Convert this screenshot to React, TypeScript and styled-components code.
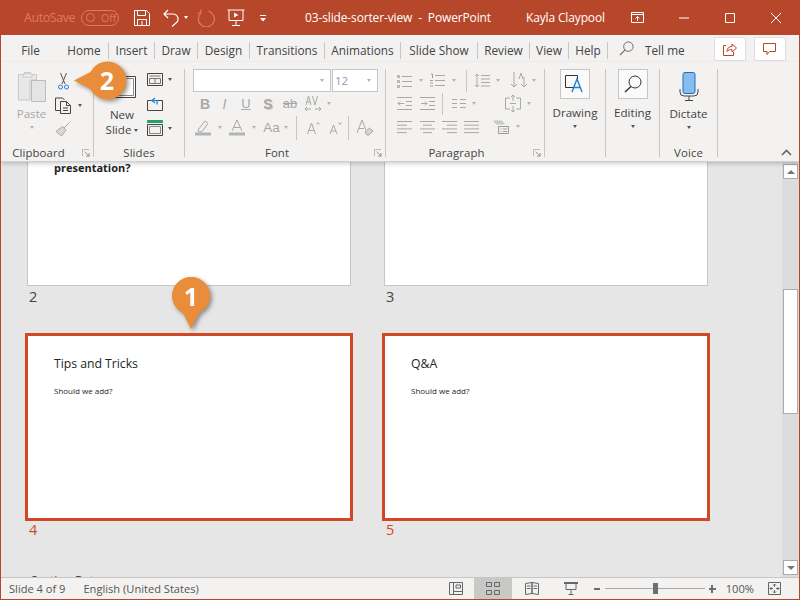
import React from "react";
import styled, { createGlobalStyle } from "styled-components";

const RUST = "#b7472a";
const DIM = "#a8a8a8";
const DARK = "#444444";
const UI_FONT = `"Open Sans", "Noto Sans", "Liberation Sans", sans-serif`;

const GlobalStyle = createGlobalStyle`
  html, body { margin: 0; padding: 0; background: #e6e6e6; }
  * { box-sizing: border-box; }
`;

const Shell = styled.div`
  position: relative;
  width: 800px;
  height: 600px;
  display: flex;
  flex-direction: column;
  overflow: hidden;
  border: 1px solid ${RUST};
  border-top: none;
  font-family: ${UI_FONT};
  background: #f3f2f1;
`;

/* title bar */
const TitleBar = styled.div`
  flex: 0 0 35px;
  margin: 0 -1px;
  display: flex;
  align-items: center;
  background: ${RUST};
  color: #fff;
  font-size: 12px;
`;

const Slot = styled.div<{ $x: number }>`
  margin-left: ${(p) => p.$x}px;
  display: flex;
  align-items: center;
  white-space: nowrap;
`;

const TitleText = styled(Slot)`
  letter-spacing: -0.14px;
`;

const AutoSave = styled.span`
  color: #de7a62;
  font-size: 12.5px;
  letter-spacing: -0.45px;
`;

const Toggle = styled.span`
  width: 38px;
  height: 16px;
  border: 1px solid #de7a62;
  border-radius: 8px;
  display: flex;
  align-items: center;
  gap: 6px;
  padding-left: 4px;
  color: #de7a62;
  font-size: 10.5px;
  &::before {
    content: "";
    width: 7px;
    height: 7px;
    border-radius: 50%;
    border: 1px solid #de7a62;
  }
`;

/* tabs */
const TabRow = styled.div`
  flex: 0 0 27px;
  display: flex;
  align-items: center;
  font-size: 11.8px;
  color: #444;
  position: relative;
`;

const Tab = styled.div<{ $w: number; $active?: boolean; $plain?: boolean }>`
  position: relative;
  width: ${(p) => p.$w}px;
  height: 17px;
  line-height: 17px;
  margin-top: 3px;
  text-align: center;
  white-space: nowrap;
  border-right: ${(p) => (p.$plain ? "none" : "1px solid #c8c6c4")};
  ${(p) =>
    p.$active &&
    `&::after {
      content: "";
      position: absolute;
      left: 6px;
      right: 4px;
      bottom: -6px;
      height: 2px;
      background: ${RUST};
    }`}
`;

const TellMe = styled(Slot)`
  margin-top: 3px;
`;

const TopButton = styled.div<{ $x: number }>`
  margin-left: ${(p) => p.$x}px;
  width: 32px;
  height: 24px;
  margin-top: 1px;
  background: #fff;
  border: 1px solid #e1dfdd;
  border-radius: 2px;
  display: flex;
  align-items: center;
  justify-content: center;
`;

/* ribbon */
const Ribbon = styled.div`
  flex: 0 0 100px;
  min-height: 0;
  position: relative;
  z-index: 2;
  display: flex;
  padding: 7px 0 4px;
  background: #f3f2f1;
  border-bottom: 1px solid #d0d0d0;
  box-shadow: 0 2px 4px rgba(0, 0, 0, 0.18);
`;

const Group = styled.div<{ $w: number }>`
  position: relative;
  width: ${(p) => p.$w}px;
  display: flex;
  flex-direction: column;
  border-right: 1px solid #c6c6c6;
`;

const GroupBody = styled.div`
  flex: 1;
  display: flex;
  min-height: 0;
`;

const GroupLabel = styled.div<{ $shift?: number }>`
  flex: none;
  height: 15px;
  line-height: 15px;
  margin-top: auto;
  margin-bottom: -3px;
  padding-right: ${(p) => p.$shift ?? 0}px;
  text-align: center;
  font-size: 11.4px;
  letter-spacing: 0.1px;
  color: #444;
`;

const Launcher = styled.svg`
  position: absolute;
  right: 3px;
  bottom: 0;
  width: 8px;
  height: 8px;
`;

const Column = styled.div<{ $w?: number; $ml?: number; $pt?: number; $start?: boolean }>`
  ${(p) => (p.$w ? `width: ${p.$w}px;` : "")}
  margin-left: ${(p) => p.$ml ?? 0}px;
  padding-top: ${(p) => p.$pt ?? 0}px;
  display: flex;
  flex-direction: column;
  align-items: ${(p) => (p.$start ? "flex-start" : "center")};
`;

const Row = styled.div<{ $h?: number; $ml?: number }>`
  display: flex;
  flex: none;
  align-items: center;
  height: ${(p) => p.$h ?? 24}px;
  margin-left: ${(p) => p.$ml ?? 0}px;
`;

const Big = styled.div<{ $dim?: boolean; $mt?: number }>`
  font-size: 11.6px;
  line-height: 15px;
  margin-top: ${(p) => p.$mt ?? 0}px;
  color: ${(p) => (p.$dim ? DIM : DARK)};
  white-space: nowrap;
`;

const Caret = styled.span<{ $ml?: number; $mt?: number; $dim?: boolean; $light?: boolean }>`
  flex: none;
  display: inline-block;
  margin-left: ${(p) => p.$ml ?? 0}px;
  margin-top: ${(p) => p.$mt ?? 0}px;
  border-left: 2.5px solid transparent;
  border-right: 2.5px solid transparent;
  border-top: 3px solid ${(p) => (p.$light ? "#fff" : p.$dim ? "#b4b4b4" : "#555")};
`;

const InlineCaret = styled(Caret)`
  vertical-align: 2px;
`;

const Combos = styled.div`
  display: flex;
  flex: none;
  height: 23px;
  margin-left: 8px;
  gap: 1px;
`;

const Combo = styled.div<{ $w: number }>`
  width: ${(p) => p.$w}px;
  background: #fff;
  border: 1px solid #c6c6c6;
  display: flex;
  align-items: center;
  justify-content: space-between;
  padding: 0 6px 0 2px;
  font-size: 11.5px;
  color: #a890b0;
`;

const Glyph = styled.span<{ $ml?: number; $w?: number; $b?: boolean; $i?: boolean; $u?: boolean; $s?: number; $strike?: boolean; $soft?: boolean }>`
  flex: none;
  width: ${(p) => p.$w ?? 10}px;
  margin-left: ${(p) => p.$ml ?? 0}px;
  text-align: center;
  font-family: "Liberation Sans", sans-serif;
  font-size: ${(p) => p.$s ?? 14}px;
  line-height: 16px;
  color: ${DIM};
  font-weight: ${(p) => (p.$b ? 700 : 400)};
  font-style: ${(p) => (p.$i ? "italic" : "normal")};
  text-decoration: ${(p) => (p.$u ? "underline" : p.$strike ? "line-through" : "none")};
  ${(p) => (p.$soft ? "text-shadow: 1px 1px 1px #ccc;" : "")}
`;

const RowRule = styled.span<{ $ml: number; $h?: number }>`
  flex: none;
  width: 1px;
  height: ${(p) => p.$h ?? 24}px;
  margin-left: ${(p) => p.$ml}px;
  background: #c6c6c6;
`;

const Tool = styled.svg<{ $ml?: number }>`
  flex: none;
  margin-left: ${(p) => p.$ml ?? 0}px;
  fill: none;
  display: block;
`;

const Spacer = styled.span<{ $w: number }>`
  width: ${(p) => p.$w}px;
`;

const IconBox = styled.div`
  width: 30px;
  height: 30px;
  background: #fafafa;
  border: 1px solid #c6c6c6;
  display: flex;
  align-items: center;
  justify-content: center;
`;

const Collapse = styled.svg`
  position: absolute;
  right: 7px;
  bottom: 5px;
  width: 11px;
  height: 7px;
`;

/* slide sorter */
const Workspace = styled.div`
  flex: 1;
  min-height: 0;
  display: flex;
  background: #e6e6e6;
`;

const Sorter = styled.div`
  flex: 1;
  min-width: 0;
  overflow: hidden;
  padding-left: 24px;
`;

const SlideRow = styled.div<{ $h: number }>`
  display: flex;
  gap: 29px;
  height: ${(p) => p.$h}px;
`;

const Cell = styled.div`
  width: 328px;
`;

const Thumb = styled.div<{ $selected?: boolean }>`
  background: #fff;
  color: #262626;
  ${(p) =>
    p.$selected
      ? `height: 188px; border: 3px solid #d24726; padding: 20px 0 0 26px;`
      : `height: 124px; margin: 0 2px; border: 1px solid #c6c6c6; border-top: none; padding: 0 0 0 26px;`}
`;

const SlideText = styled.div`
  font-size: 11px;
  line-height: 12px;
  font-weight: 700;
  color: #222;
`;

const SlideTitle = styled.div`
  font-size: 12.3px;
  line-height: 16px;
  letter-spacing: -0.05px;
`;

const SlideBody = styled.div`
  margin-top: 13px;
  font-size: 8px;
  line-height: 12px;
`;

const SlideNumber = styled.div<{ $selected?: boolean }>`
  padding: ${(p) => (p.$selected ? 0 : 1)}px 0 0 4px;
  margin-top: ${(p) => (p.$selected ? -1 : 0)}px;
  font-size: 14.5px;
  line-height: 20px;
  color: ${(p) => (p.$selected ? "#d24726" : "#444")};
`;

const SectionTitle = styled.div`
  margin: 32px 0 0 6px;
  height: 4px;
  overflow: hidden;
  font-size: 12px;
  line-height: 16px;
  color: #444;
`;

const Scrollbar = styled.div`
  flex: 0 0 17px;
  display: flex;
  flex-direction: column;
  align-items: center;
  background: #dcdcdc;
  padding-top: 2px;
`;

const ScrollButton = styled.div<{ $mt?: number }>`
  width: 15px;
  height: 15px;
  margin-top: ${(p) => p.$mt ?? 0}px;
  background: #fff;
  border: 1px solid #ababab;
  display: flex;
  align-items: center;
  justify-content: center;
`;

const ScrollThumb = styled.div`
  width: 15px;
  height: 125px;
  margin-top: 110px;
  background: #fff;
  border: 1px solid #ababab;
`;

const Arrow = styled.span<{ $up?: boolean }>`
  border-left: 4px solid transparent;
  border-right: 4px solid transparent;
  ${(p) => (p.$up ? "border-bottom" : "border-top")}: 4px solid #777;
`;

/* status bar */
const StatusBar = styled.div`
  flex: 0 0 22px;
  display: flex;
  align-items: center;
  background: #f3f2f1;
  border-top: 1px solid #c6c6c6;
  font-size: 11.1px;
  color: #555;
`;

const StatusView = styled.div<{ $x: number; $active?: boolean; $w?: number }>`
  margin-left: ${(p) => p.$x}px;
  width: ${(p) => p.$w ?? 16}px;
  height: 21px;
  display: flex;
  align-items: center;
  justify-content: center;
  background: ${(p) => (p.$active ? "#c8c8c6" : "transparent")};
`;

const ZoomTrack = styled.div`
  position: relative;
  width: 100px;
  height: 1px;
  margin-left: 5px;
  background: #a8a8a8;
  &::after {
    content: "";
    position: absolute;
    left: 48px;
    top: -5px;
    width: 5px;
    height: 11px;
    background: #6e6e6e;
  }
`;

const ZoomSign = styled.span<{ $plus?: boolean; $ml: number }>`
  position: relative;
  flex: none;
  width: ${(p) => (p.$plus ? 7 : 6)}px;
  height: 2px;
  margin-left: ${(p) => p.$ml}px;
  background: #6e6e6e;
  ${(p) =>
    p.$plus &&
    `&::after { content: ""; position: absolute; left: 2.5px; top: -3px; width: 2px; height: 8px; background: #6e6e6e; }`}
`;

/* callouts */
const Callout = styled.div<{ $x: number; $y: number; $w: number; $h: number }>`
  position: absolute;
  z-index: 5;
  left: ${(p) => p.$x}px;
  top: ${(p) => p.$y}px;
  width: ${(p) => p.$w}px;
  height: ${(p) => p.$h}px;
  filter: drop-shadow(2px 2px 2px rgba(0, 0, 0, 0.4));
`;

const CalloutText = styled.span<{ $x: number; $y: number }>`
  position: absolute;
  left: ${(p) => p.$x}px;
  top: ${(p) => p.$y}px;
  width: 38px;
  text-align: center;
  font-family: "Open Sans", sans-serif;
  font-weight: 700;
  font-size: 25px;
  line-height: 38px;
  color: #fff;
`;

/* drawn icons */
const stroke = (c: string, w = 1) => ({ stroke: c, strokeWidth: w });

const Lines = ({ ml, kind }: { ml?: number; kind: "l" | "c" | "r" | "j" }) => {
  const ends = {
    l: [[0, 15], [0, 10], [0, 15], [0, 10]],
    c: [[0, 15], [3, 12], [0, 15], [3, 12]],
    r: [[0, 15], [5, 15], [0, 15], [5, 15]],
    j: [[0, 15], [0, 15], [0, 15], [0, 15]],
  }[kind];
  return (
    <Tool $ml={ml} width="15" height="14" viewBox="0 0 15 14">
      {ends.map(([a, b], i) => (
        <path key={i} d={`M${a} ${1.5 + i * 3.7}H${b}`} {...stroke(DIM)} />
      ))}
    </Tool>
  );
};

const launcher = (
  <Launcher viewBox="0 0 9 9" fill="none">
    <path d="M.5 8V.5H8" stroke="#b0b0b0" />
    <path d="M3 3l5 5M8 4.5V8H4.5" stroke="#8a8a8a" />
  </Launcher>
);

export default function App() {
  return (
    <Shell>
      <GlobalStyle />
      <TitleBar>
        <Slot $x={24}>
          <AutoSave>AutoSave</AutoSave>
        </Slot>
        <Slot $x={6}>
          <Toggle>Off</Toggle>
        </Slot>
        <Slot $x={15}>
          <Tool width="16" height="16" viewBox="0 0 16 16">
            <path d="M.5.5h12l3 3v12H.5zM3.5.5v5h8v-5M3.5 15.5v-6h9v6M8 11v4" {...stroke("#fff")} />
          </Tool>
        </Slot>
        <Slot $x={13}>
          <Tool width="18" height="18" viewBox="0 0 18 18">
            <path d="M5 1 1 5l4 4M1 5h9a5 5 0 0 1 3 9l-4 3.5" {...stroke("#fff", 1.2)} />
          </Tool>
          <Caret $ml={3} $light />
        </Slot>
        <Slot $x={9}>
          <Tool width="18" height="18" viewBox="0 0 18 18">
            <path d="M11.5 2.2A8 8 0 1 1 4 4M4 4V.5M4 4H.5" {...stroke("#de7a62", 1.2)} />
          </Tool>
        </Slot>
        <Slot $x={12}>
          <Tool width="18" height="18" viewBox="0 0 18 18">
            <path d="M.5 1h17M2 1v10.5h14V1M9 11.5v5M5 16.5h8" {...stroke("#fff")} />
            <path d="M7 3.5v5l4.5-2.5z" fill="#fff" />
          </Tool>
        </Slot>
        <Slot $x={15}>
          <Tool width="6" height="8" viewBox="0 0 6 8">
            <path d="M0 1.5h6" {...stroke("#fff")} />
            <path d="M0 4h6L3 7.5z" fill="#fff" />
          </Tool>
        </Slot>
        <TitleText $x={39}>03-slide-sorter-view&nbsp; -&nbsp; PowerPoint</TitleText>
        <TitleText $x={35}>Kayla Claypool</TitleText>
        <Slot $x={26}>
          <Tool width="13" height="11" viewBox="0 0 13 11">
            <path d="M.5.5h12v10H.5zM.5 2.5h12M6.5 9V4.5M4.5 6.5l2-2 2 2" {...stroke("#fff")} />
          </Tool>
        </Slot>
        <Slot $x={35}>
          <Tool width="10" height="2" viewBox="0 0 10 2">
            <path d="M0 1h10" {...stroke("#fff")} />
          </Tool>
        </Slot>
        <Slot $x={36}>
          <Tool width="10" height="10" viewBox="0 0 10 10">
            <path d="M.5.5h9v9h-9z" {...stroke("#fff")} />
          </Tool>
        </Slot>
        <Slot $x={36}>
          <Tool width="10" height="10" viewBox="0 0 10 10">
            <path d="M0 0l10 10M10 0 0 10" {...stroke("#fff")} />
          </Tool>
        </Slot>
      </TitleBar>

      <TabRow>
        <Tab $w={59} $plain>File</Tab>
        <Tab $w={49} $active>Home</Tab>
        <Tab $w={46}>Insert</Tab>
        <Tab $w={43}>Draw</Tab>
        <Tab $w={52}>Design</Tab>
        <Tab $w={75}>Transitions</Tab>
        <Tab $w={76}>Animations</Tab>
        <Tab $w={77}>Slide Show</Tab>
        <Tab $w={52}>Review</Tab>
        <Tab $w={39}>View</Tab>
        <Tab $w={39}>Help</Tab>
        <Slot $x={11}>
          <Tool width="15" height="15" viewBox="0 0 16 16">
            <circle cx="10" cy="6" r="5" {...stroke("#666")} />
            <path d="M6.5 9.5 1 15" {...stroke("#666", 1.2)} />
          </Tool>
        </Slot>
        <TellMe $x={11}>Tell me</TellMe>
        <TopButton $x={29}>
          <Tool width="14" height="14" viewBox="0 0 14 14">
            <path d="M3 3.5H.5v10h10V10M4 9.5C4 6 6 4.5 9 4.5V2l4.5 4L9 10V7.5C7 7.5 5 8 4 9.5z" {...stroke(RUST)} />
          </Tool>
        </TopButton>
        <TopButton $x={8}>
          <Tool width="14" height="13" viewBox="0 0 14 13">
            <path d="M.5.5h12v8H6.5l-2.5 3v-3H.5z" {...stroke(RUST)} />
          </Tool>
        </TopButton>
      </TabRow>

      <Ribbon>
        <Group $w={93}>
          <GroupBody>
            <Column $w={29} $ml={16} $pt={2}>
              <Tool width="28" height="32" viewBox="0 0 28 32">
                <path d="M.5 3.5h6v-2h6v2h6V9h-6.5v20H.5z" fill="#e8e8e8" stroke="#c8c8c8" />
                <path d="M5 3h9v3H5z" fill="#f3f2f1" stroke="#c8c8c8" />
                <path d="M13.5 9.5h14v21h-14z" fill="#e4e4e4" stroke="#bdbdbd" />
              </Tool>
              <Big $dim $mt={3}>Paste</Big>
              <Caret $dim $mt={5} />
            </Column>
            <Column $ml={8}>
              <Row $h={24} $ml={-1}>
                <Tool $ml={5} width="11" height="17" viewBox="0 0 11 17">
                  <path d="M2.5 0 7 11M8.5 0 4 11" {...stroke("#555")} />
                  <circle cx="2.5" cy="14" r="2" {...stroke("#1f7fd0")} />
                  <circle cx="8.5" cy="14" r="2" {...stroke("#1f7fd0")} />
                </Tool>
                <Spacer $w={14} />
              </Row>
              <Row $h={24}>
                <Tool width="17" height="17" viewBox="0 0 17 17">
                  <path d="M5 13.5H.5V1h7l2 2M5.5 4.5h6l4 4v8h-10z" {...stroke("#444")} />
                  <path d="M11.5 4.5v4h4M8 11h5M8 13.5h5" {...stroke("#444")} />
                </Tool>
                <Caret $ml={6} />
              </Row>
              <Row $h={24} $ml={-11}>
                <Tool width="16" height="16" viewBox="0 0 16 16">
                  <path d="M9 7 14.5 1.5M7.5 5.5 11 9l-4.5 6L1 10.5z" fill="#d8d8d8" stroke="#a8a8a8" />
                </Tool>
              </Row>
            </Column>
          </GroupBody>
          <GroupLabel $shift={17}>Clipboard</GroupLabel>
          {launcher}
        </Group>

        <Group $w={91}>
          <GroupBody>
            <Column $w={52} $pt={7} $ml={2}>
              <Tool width="28" height="22" viewBox="0 0 28 22">
                <path d="M.5.5h27v21H.5z" fill="#fff" stroke="#444" />
                <path d="M2.5 2.5h23v17h-23z" stroke="#888" />
              </Tool>
              <Big $mt={9}>New</Big>
              <Big>
                Slide<InlineCaret $ml={3} />
              </Big>
            </Column>
            <Column $ml={-1} $start>
              <Row $h={20}>
                <Tool width="16" height="13" viewBox="0 0 16 13">
                  <path d="M.5.5h15v12H.5z" {...stroke("#444")} />
                  <path d="M2.5 3h11M2.5 5.5h11v5h-11zM8 5.5v5" {...stroke("#777")} />
                </Tool>
                <Caret $ml={5} />
              </Row>
              <Row $h={29}>
                <Tool width="16" height="14" viewBox="0 0 16 14">
                  <path d="M.5 3.5h15v10H.5z" {...stroke("#444")} />
                  <path d="M8 1 5 3.5 8 6M5 3.5h5v4" {...stroke("#1f7fd0", 1.2)} />
                </Tool>
              </Row>
              <Row $h={20}>
                <Tool width="16" height="16" viewBox="0 0 16 16">
                  <path d="M.5.5h15v2H.5z" stroke="#21a366" fill="#21a366" />
                  <path d="M.5 4.5h15v11H.5z" {...stroke("#444")} />
                  <path d="M2.5 6.5h11v7h-11z" {...stroke("#888")} />
                </Tool>
                <Caret $ml={5} />
              </Row>
            </Column>
          </GroupBody>
          <GroupLabel>Slides</GroupLabel>
        </Group>

        <Group $w={201}>
          <Combos>
            <Combo $w={138}>
              <span />
              <Caret $dim />
            </Combo>
            <Combo $w={46}>
              <span>12</span>
              <Caret $dim />
            </Combo>
          </Combos>
          <Row $h={23} $ml={15}>
            <Glyph $b>B</Glyph>
            <Glyph $i $ml={10} $w={9}>I</Glyph>
            <Glyph $u $ml={12} $w={10} $s={13}>U</Glyph>
            <Glyph $b $soft $ml={12} $w={10}>S</Glyph>
            <Glyph $strike $ml={9} $w={16} $s={13}>ab</Glyph>
            <Tool $ml={7} width="16" height="17" viewBox="0 0 16 17">
              <path d="M1 10 3.5 1 6 10M1.8 7h3.5M7.5 1 10 10l2.5-9" {...stroke(DIM)} />
              <path d="M6 14H0M2 12l-2 2 2 2M10 14h6M14 12l2 2-2 2" {...stroke(DIM)} />
            </Tool>
            <Caret $dim $ml={6} />
          </Row>
          <Row $h={25} $ml={10}>
            <Tool width="17" height="17" viewBox="0 0 17 17">
              <path d="M3 11 10 2l3 2.5-6 8-3.5.5z" {...stroke(DIM)} />
              <path d="M0 13.5h16v3H0z" fill="#b4b4b4" />
            </Tool>
            <Caret $dim $ml={6} />
            <Tool $ml={7} width="17" height="17" viewBox="0 0 17 17">
              <path d="M3 12 8 1l5 11M4.8 8.5h7" {...stroke(DIM)} />
              <path d="M0 13.5h16v3H0z" fill="#b4b4b4" />
            </Tool>
            <Caret $dim $ml={6} />
            <Glyph $ml={6} $w={19} $s={13.5}>Aa</Glyph>
            <Caret $dim $ml={3} />
            <RowRule $ml={8} />
            <Tool $ml={10} width="14" height="14" viewBox="0 0 14 14">
              <path d="M.5 13 4.5 2l4 11M2 9.5h5M9.5 3.5l1.5-2 1.5 2" {...stroke(DIM)} />
            </Tool>
            <Tool $ml={8} width="14" height="14" viewBox="0 0 14 14">
              <path d="M1 13 4.5 4 8 13M2.2 10h4.6M9.5 1.5l1.5 2 1.5-2" {...stroke(DIM)} />
            </Tool>
            <RowRule $ml={5} />
            <Tool $ml={7} width="18" height="17" viewBox="0 0 18 17">
              <path d="M1 14 6 1l4 10M3 9.5h5" {...stroke(DIM)} />
              <path d="M9 13l4.5-4 3.5 3-4 4h-2z" fill="#d4d4d4" stroke={DIM} />
            </Tool>
          </Row>
          <GroupLabel $shift={16}>Font</GroupLabel>
          {launcher}
        </Group>

        <Group $w={159}>
          <Row $h={23} $ml={11}>
            <Tool width="15" height="14" viewBox="0 0 15 14">
              <path d="M0 1h3v3H0zM0 6h3v3H0zM0 11h3v3H0z" fill="#b8b8b8" />
              <path d="M5 2.5h10M5 7.5h10M5 12.5h10" {...stroke(DIM)} />
            </Tool>
            <Caret $dim $ml={7} />
            <Tool $ml={7} width="15" height="15" viewBox="0 0 15 15">
              <path d="M1 1h1.5v4M0 7.5h3M0 10h3M0 13h3" {...stroke("#a0a0a0")} />
              <path d="M5 2.5h10M5 7.5h10M5 12.5h10" {...stroke(DIM)} />
            </Tool>
            <Caret $dim $ml={7} />
            <RowRule $ml={10} $h={22} />
            <Tool $ml={7} width="16" height="15" viewBox="0 0 16 15">
              <path d="M3 1v13M1 3l2-2 2 2M1 12l2 2 2-2M7 2.5h9M7 6h9M7 9.5h9M7 13h9" {...stroke(DIM)} />
            </Tool>
            <Caret $dim $ml={6} />
            <Tool $ml={11} width="16" height="17" viewBox="0 0 16 17">
              <path d="M3 0v15M0 12l3 3 3-3M13 5v10M10 12l3 3 3-3M8 7l2-6 2 6" {...stroke(DIM)} />
            </Tool>
            <Caret $dim $ml={5} />
          </Row>
          <Row $h={23} $ml={11}>
            <Tool width="15" height="13" viewBox="0 0 15 13">
              <path d="M0 .5h15M9 4.5h6M9 8.5h6M0 12.5h15M7 6.5H1M3 4.5l-2 2 2 2" {...stroke(DIM)} />
            </Tool>
            <Tool $ml={8} width="15" height="13" viewBox="0 0 15 13">
              <path d="M0 .5h15M9 4.5h6M9 8.5h6M0 12.5h15M1 6.5h6M5 4.5l2 2-2 2" {...stroke(DIM)} />
            </Tool>
            <RowRule $ml={7} $h={22} />
            <Tool $ml={9} width="14" height="9" viewBox="0 0 14 9">
              <path d="M0 .5h5M0 4.5h5M0 8.5h5M8 .5h6M8 4.5h6M8 8.5h6" {...stroke(DIM)} />
            </Tool>
            <Caret $dim $ml={6} />
            <Tool $ml={29} width="16" height="17" viewBox="0 0 16 17">
              <path d="M5 3H.5v11H5M11 3h4.5v11H11M8 0v6M6 2l2-2 2 2M8 11v6M6 15l2 2 2-2M5 8.5h6" {...stroke(DIM)} />
            </Tool>
            <Caret $dim $ml={6} />
          </Row>
          <Row $h={23} $ml={11}>
            <Lines kind="l" />
            <Lines kind="c" ml={8} />
            <Lines kind="r" ml={7} />
            <Lines kind="j" ml={7} />
            <Tool $ml={14} width="16" height="14" viewBox="0 0 16 14">
              <path d="M0 .5h9l3 4H3z" fill="#c8c8c8" />
              <path d="M5.5 6.5h10v7h-10zM7.5 9h1M10 9h4M7.5 11.5h1M10 11.5h4" {...stroke("#9a9a9a")} />
            </Tool>
            <Caret $dim $ml={7} />
          </Row>
          <GroupLabel $shift={17}>Paragraph</GroupLabel>
          {launcher}
        </Group>

        <Group $w={61}>
          <Column>
            <IconBox>
              <Tool width="20" height="20" viewBox="0 0 20 20">
                <path d="M.5 1.5h12v12H.5z" {...stroke("#333")} />
                <path d="M7 18 12 5l5 13M8.8 13.5h6.5" fill="#f8f8f8" stroke="#1f7fd0" strokeWidth="1.4" />
              </Tool>
            </IconBox>
            <Big $mt={6}>Drawing</Big>
            <Caret $mt={5} />
          </Column>
        </Group>

        <Group $w={54}>
          <Column>
            <IconBox>
              <Tool width="18" height="18" viewBox="0 0 18 18">
                <circle cx="11" cy="7" r="6" {...stroke("#333")} />
                <path d="M7 11.5 1 17" {...stroke("#333", 1.4)} />
              </Tool>
            </IconBox>
            <Big $mt={6}>Editing</Big>
            <Caret $mt={5} />
          </Column>
        </Group>

        <Group $w={58}>
          <Column $pt={3}>
            <Tool width="20" height="29" viewBox="0 0 20 29">
              <rect x="4" y=".5" width="12" height="21" rx="2" fill="#85bdf0" stroke="#1f6fb8" />
              <path d="M1 17v3a4 4 0 0 0 4 4h10a4 4 0 0 0 4-4v-3M10 24v4M6 28.5h8" {...stroke("#444")} />
            </Tool>
            <Big $mt={5}>Dictate</Big>
            <Caret $mt={5} />
          </Column>
          <GroupLabel>Voice</GroupLabel>
        </Group>
        <Collapse viewBox="0 0 11 7" fill="none">
          <path d="M1 6l4.5-4.5L10 6" stroke="#666" strokeWidth="1.6" />
        </Collapse>
      </Ribbon>

      <Workspace>
        <Sorter>
          <SlideRow $h={171}>
            <Cell>
              <Thumb>
                <SlideText>presentation?</SlideText>
              </Thumb>
              <SlideNumber>2</SlideNumber>
            </Cell>
            <Cell>
              <Thumb />
              <SlideNumber>3</SlideNumber>
            </Cell>
          </SlideRow>
          <SlideRow $h={208}>
            <Cell>
              <Thumb $selected>
                <SlideTitle>Tips and Tricks</SlideTitle>
                <SlideBody>Should we add?</SlideBody>
              </Thumb>
              <SlideNumber $selected>4</SlideNumber>
            </Cell>
            <Cell>
              <Thumb $selected>
                <SlideTitle>Q&amp;A</SlideTitle>
                <SlideBody>Should we add?</SlideBody>
              </Thumb>
              <SlideNumber $selected>5</SlideNumber>
            </Cell>
          </SlideRow>
          <SectionTitle>Section Beta</SectionTitle>
        </Sorter>
        <Scrollbar>
          <ScrollButton>
            <Arrow $up />
          </ScrollButton>
          <ScrollThumb />
          <ScrollButton $mt={146}>
            <Arrow />
          </ScrollButton>
        </Scrollbar>
      </Workspace>

      <StatusBar>
        <Slot $x={8}>Slide 4 of 9</Slot>
        <Slot $x={18}>English (United States)</Slot>
        <StatusView $x={249}>
          <Tool width="14" height="13" viewBox="0 0 14 13">
            <path d="M.5.5h13v12H.5zM4.5.5v12M7 3h4.5v3H7zM4.5 9.5h9" {...stroke("#666")} />
          </Tool>
        </StatusView>
        <StatusView $x={10} $w={38} $active>
          <Tool width="14" height="13" viewBox="0 0 14 13">
            <path d="M.5.5h5v4h-5zM8.5.5h5v4h-5zM.5 8.5h5v4h-5zM8.5 8.5h5v4h-5z" {...stroke("#666")} />
          </Tool>
        </StatusView>
        <StatusView $x={12}>
          <Tool width="14" height="13" viewBox="0 0 14 13">
            <path d="M.5 1.5 7 .5v11l-6.5 1zM13.5 1.5 7 .5v11l6.5 1zM2 4h3.5M2 6.5h3.5M8.5 4H12M8.5 6.5H12" {...stroke("#666")} />
          </Tool>
        </StatusView>
        <StatusView $x={23}>
          <Tool width="14" height="13" viewBox="0 0 14 13">
            <path d="M0 1h14" {...stroke("#666", 2)} />
            <path d="M2 1v6.5h10V1M7 7.5v5M4.5 12.5h5" {...stroke("#666")} />
          </Tool>
        </StatusView>
        <ZoomSign $ml={15} />
        <ZoomTrack />
        <ZoomSign $plus $ml={4} />
        <Slot $x={10}>100%</Slot>
        <Slot $x={14}>
          <Tool width="13" height="13" viewBox="0 0 13 13">
            <path d="M.5.5h12v12H.5zM6.5 2v3M5 3.5 6.5 2 8 3.5M6.5 11V8M5 9.5 6.5 11 8 9.5M2 6.5h3M3.5 5 2 6.5 3.5 8M11 6.5H8M9.5 5 11 6.5 9.5 8" {...stroke("#666")} />
          </Tool>
        </Slot>
      </StatusBar>

      <Callout $x={72} $y={61} $w={54} $h={40}>
        <svg width="54" height="40" viewBox="0 0 54 40">
          <path d="M1 19.5 17.5 11A19 19 0 1 1 17.5 28z" fill="#e98d3a" />
        </svg>
        <CalloutText $x={15} $y={0}>2</CalloutText>
      </Callout>
      <Callout $x={171} $y={277} $w={38} $h={54}>
        <svg width="38" height="54" viewBox="0 0 38 54">
          <path d="M19 52 11 36A19 19 0 1 1 27 36z" fill="#e98d3a" />
        </svg>
        <CalloutText $x={0} $y={0}>1</CalloutText>
      </Callout>
    </Shell>
  );
}
